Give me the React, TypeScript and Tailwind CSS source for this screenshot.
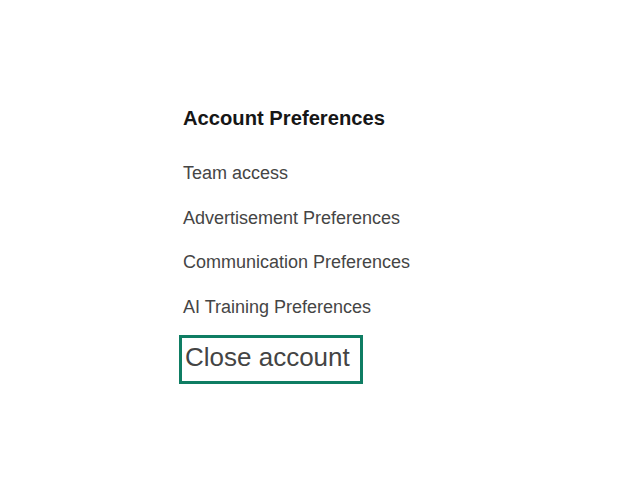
export default function App() {
  const items = [
    'Team access',
    'Advertisement Preferences',
    'Communication Preferences',
    'AI Training Preferences',
  ]

  return (
    <div
      className="min-h-[480px] w-full bg-white pl-[183px] pt-[106px]"
      style={{ fontFamily: '"Liberation Sans", Arial, sans-serif' }}
    >
      <h2 className="text-[20.2px] font-bold leading-[24px] text-[#161616]">Account Preferences</h2>

      <ul className="mt-[30px] flex flex-col gap-[17.7px]">
        {items.map((item) => (
          <li key={item}>
            <a href="#" className="block text-[18px] leading-[27px] text-[#454545]">
              {item}
            </a>
          </li>
        ))}
      </ul>

      <a
        href="#"
        className="-ml-[4px] mt-[14px] inline-block border-[3px] border-[#0f7d63] pb-[4px] pl-[3px] pr-[10px] text-[26px] leading-[39px] text-[#444]"
      >
        Close account
      </a>
    </div>
  )
}
